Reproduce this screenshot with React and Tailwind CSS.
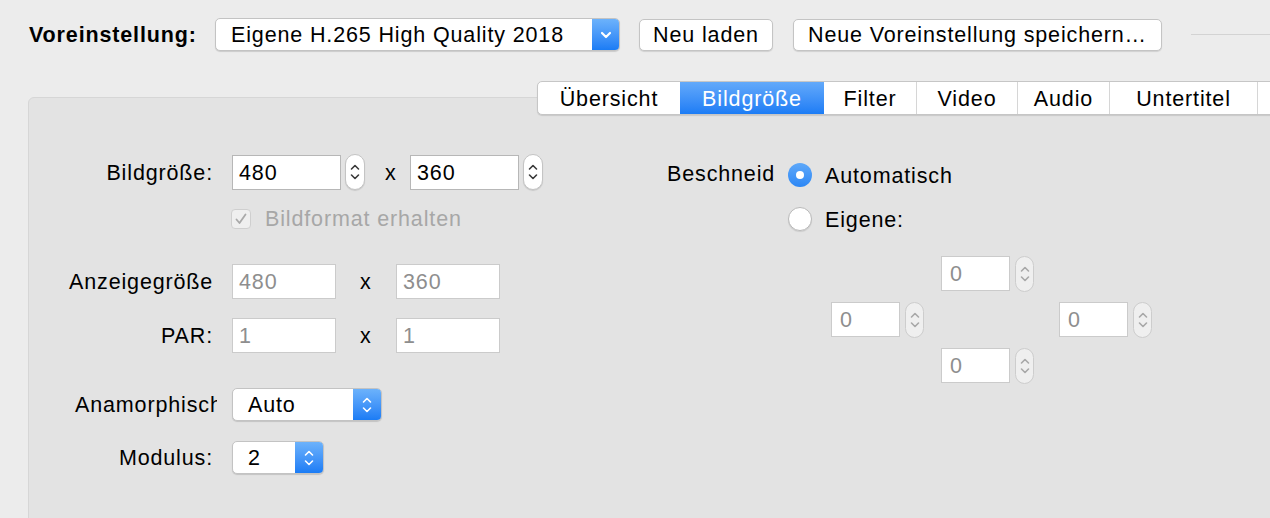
import React from "react";

function UpDown({ color = "#3a3a3a" }) {
  return (
    <svg width="10" height="20" viewBox="0 0 10 20" fill="none" stroke={color} strokeWidth="1.6" strokeLinecap="round" strokeLinejoin="round">
      <path d="M1.5 7 L5 3.5 L8.5 7" />
      <path d="M1.5 13 L5 16.5 L8.5 13" />
    </svg>
  );
}

function Stepper({ disabled }) {
  return (
    <div
      className={
        disabled
          ? "w-[19px] h-[36px] shrink-0 rounded-full bg-[#efefef] border border-[#cdcdcd] flex items-center justify-center"
          : "w-[20px] h-[36px] shrink-0 rounded-full bg-white border border-[#c4c4c4] shadow-[0_1px_1px_rgba(0,0,0,0.12)] flex items-center justify-center"
      }
    >
      <UpDown color={disabled ? "#a8a8a8" : "#3a3a3a"} />
    </div>
  );
}

function Field({ w, value, disabled, pl = "pl-[6px]" }) {
  return (
    <div
      className={`${w} h-[35px] shrink-0 bg-white border flex items-center pt-[3px] ${pl} ${
        disabled ? "border-[#cbcbcb] text-[#8e8e8e]" : "border-[#b7b7b7] text-black"
      }`}
    >
      {value}
    </div>
  );
}

function Popup({ w, blueW, text, single }) {
  return (
    <div className={`${w} h-[33px] shrink-0 flex rounded-[5px] bg-white border border-[#c3c3c3] shadow-[0_1px_1px_rgba(0,0,0,0.14)] overflow-hidden`}>
      <div className="flex-1 flex items-center pl-[15px] pt-[3px] whitespace-nowrap">{text}</div>
      <div className={`${blueW} bg-linear-to-b from-[#6cb2fb] to-[#1a7cf5] flex items-center justify-center`}>
        {single ? (
          <svg width="12" height="8" viewBox="0 0 12 8" fill="none" stroke="white" strokeWidth="2.2" strokeLinecap="round" strokeLinejoin="round">
            <path d="M2 2 L6 6 L10 2" />
          </svg>
        ) : (
          <UpDown color="white" />
        )}
      </div>
    </div>
  );
}

function Button({ w, children }) {
  return (
    <div className={`${w} h-[32px] shrink-0 bg-white border border-[#c4c4c4] rounded-[5px] shadow-[0_1px_1px_rgba(0,0,0,0.12)] flex items-center justify-center pt-[3px] whitespace-nowrap`}>
      {children}
    </div>
  );
}

const tabs = [
  { label: "Übersicht", w: "w-[142px]" },
  { label: "Bildgröße", w: "w-[144px]", active: true },
  { label: "Filter", w: "w-[92px]" },
  { label: "Video", w: "w-[101px]" },
  { label: "Audio", w: "w-[92px]" },
  { label: "Untertitel", w: "w-[148px]" },
  { label: "", w: "w-[110px]" },
];

function CropCell({ className }) {
  return (
    <div className={`${className} flex items-center`}>
      <Field w="w-[69px]" value="0" disabled pl="pl-[8px]" />
      <div className="ml-[5px]">
        <Stepper disabled />
      </div>
    </div>
  );
}

export default function App() {
  return (
    <div className="w-[1270px] h-[518px] overflow-hidden bg-[#ececec] pt-[18px] font-['Liberation_Sans',Arial,sans-serif] text-[21.5px] tracking-[0.04em] text-black leading-none">
      {/* toolbar */}
      <div className="flex items-center h-[33px] pl-[29px]">
        <span className="w-[186px] shrink-0 font-bold pt-[3px]">Voreinstellung:</span>
        <Popup w="w-[405px]" blueW="w-[27px]" text="Eigene H.265 High Quality 2018" single />
        <div className="ml-[19px]">
          <Button w="w-[134px]">Neu laden</Button>
        </div>
        <div className="ml-[20px]">
          <Button w="w-[369px]">Neue Voreinstellung speichern…</Button>
        </div>
        <div className="ml-[29px] flex-1 h-px bg-[#d3d3d3]" />
      </div>

      {/* tabs */}
      <div className="relative z-10 mt-[30px] ml-[537px] flex h-[34px] w-[900px] bg-white border border-[#c6c6c6] rounded-l-[5px] shadow-[0_1px_1px_rgba(0,0,0,0.12)] overflow-hidden">
        {tabs.map((t, i) => (
          <div
            key={i}
            className={`${t.w} shrink-0 h-full flex items-center justify-center pt-[3px] whitespace-nowrap ${
              t.active
                ? "bg-linear-to-b from-[#62a9fa] to-[#1b7cf5] text-white"
                : i > 0 && !tabs[i - 1].active
                ? "border-l border-[#d6d6d6]"
                : ""
            }`}
          >
            {t.label}
          </div>
        ))}
      </div>

      {/* panel */}
      <div className="-mt-[18px] ml-[28px] w-[1400px] h-[500px] rounded-[6px] border border-[#d6d6d6] bg-[#e3e3e3] flex">
        {/* left column */}
        <div className="w-[638px] shrink-0 pl-[40px] pt-[56px] flex flex-col">
          <div className="flex items-center h-[36px]">
            <div className="w-[144px] text-right whitespace-nowrap pt-[3px]">Bildgröße:</div>
            <div className="ml-[19px]">
              <Field w="w-[109px]" value="480" />
            </div>
            <div className="ml-[4px]">
              <Stepper />
            </div>
            <div className="w-[45px] pl-[20px] pt-[3px]">x</div>
            <Field w="w-[109px]" value="360" />
            <div className="ml-[4px]">
              <Stepper />
            </div>
          </div>

          <div className="mt-[18px] h-[21px] flex items-center pl-[162px]">
            <div className="w-[20px] h-[20px] rounded-[4px] border border-[#cfcfcf] bg-[#efefef] flex items-center justify-center">
              <svg width="14" height="14" viewBox="0 0 14 14" fill="none" stroke="#a9a9a9" strokeWidth="1.8" strokeLinecap="round" strokeLinejoin="round">
                <path d="M2.5 7.5 L5.5 11 L11.5 2.5" />
              </svg>
            </div>
            <span className="ml-[14px] pt-[3px] text-[#a7a7a7] whitespace-nowrap">Bildformat erhalten</span>
          </div>

          <div className="mt-[35px] flex items-center h-[35px]">
            <div className="w-[144px] text-right whitespace-nowrap pt-[3px]">Anzeigegröße</div>
            <div className="ml-[19px]">
              <Field w="w-[104px]" value="480" disabled />
            </div>
            <div className="w-[60px] pl-[24px] pt-[3px]">x</div>
            <Field w="w-[104px]" value="360" disabled />
          </div>

          <div className="mt-[19px] flex items-center h-[35px]">
            <div className="w-[144px] text-right whitespace-nowrap pt-[3px]">PAR:</div>
            <div className="ml-[19px]">
              <Field w="w-[104px]" value="1" disabled />
            </div>
            <div className="w-[60px] pl-[24px] pt-[3px]">x</div>
            <Field w="w-[104px]" value="1" disabled />
          </div>

          <div className="mt-[35px] flex items-center h-[33px]">
            <div className="w-[148px] pl-[6px] pt-[3px] overflow-hidden whitespace-nowrap">Anamorphisch</div>
            <div className="ml-[15px]">
              <Popup w="w-[150px]" blueW="w-[28px]" text="Auto" />
            </div>
          </div>

          <div className="mt-[20px] flex items-center h-[33px]">
            <div className="w-[144px] text-right whitespace-nowrap pt-[3px]">Modulus:</div>
            <div className="ml-[19px]">
              <Popup w="w-[92px]" blueW="w-[28px]" text="2" />
            </div>
          </div>
        </div>

        {/* right column */}
        <div className="pt-[65px] flex flex-col">
          <div className="flex items-center h-[24px]">
            <div className="w-[121px] whitespace-nowrap">Beschneid</div>
            <div className="w-[24px] h-[24px] rounded-full bg-linear-to-b from-[#5ea8f9] to-[#2b87f5] flex items-center justify-center">
              <div className="w-[8px] h-[8px] rounded-full bg-white" />
            </div>
            <span className="ml-[13px] pt-[3px] whitespace-nowrap">Automatisch</span>
          </div>
          <div className="mt-[20px] flex items-center h-[24px] pl-[121px]">
            <div className="w-[24px] h-[24px] rounded-full bg-white border border-[#b9b9b9] shadow-[0_1px_1px_rgba(0,0,0,0.1)]" />
            <span className="ml-[13px] pt-[3px] whitespace-nowrap">Eigene:</span>
          </div>

          <div className="mt-[25px] ml-[164px] grid grid-cols-[110px_118px_93px] grid-rows-[35px_35px_35px] gap-y-[11px]">
            <CropCell className="col-start-2 row-start-1" />
            <CropCell className="col-start-1 row-start-2" />
            <CropCell className="col-start-3 row-start-2" />
            <CropCell className="col-start-2 row-start-3" />
          </div>
        </div>
      </div>
    </div>
  );
}
